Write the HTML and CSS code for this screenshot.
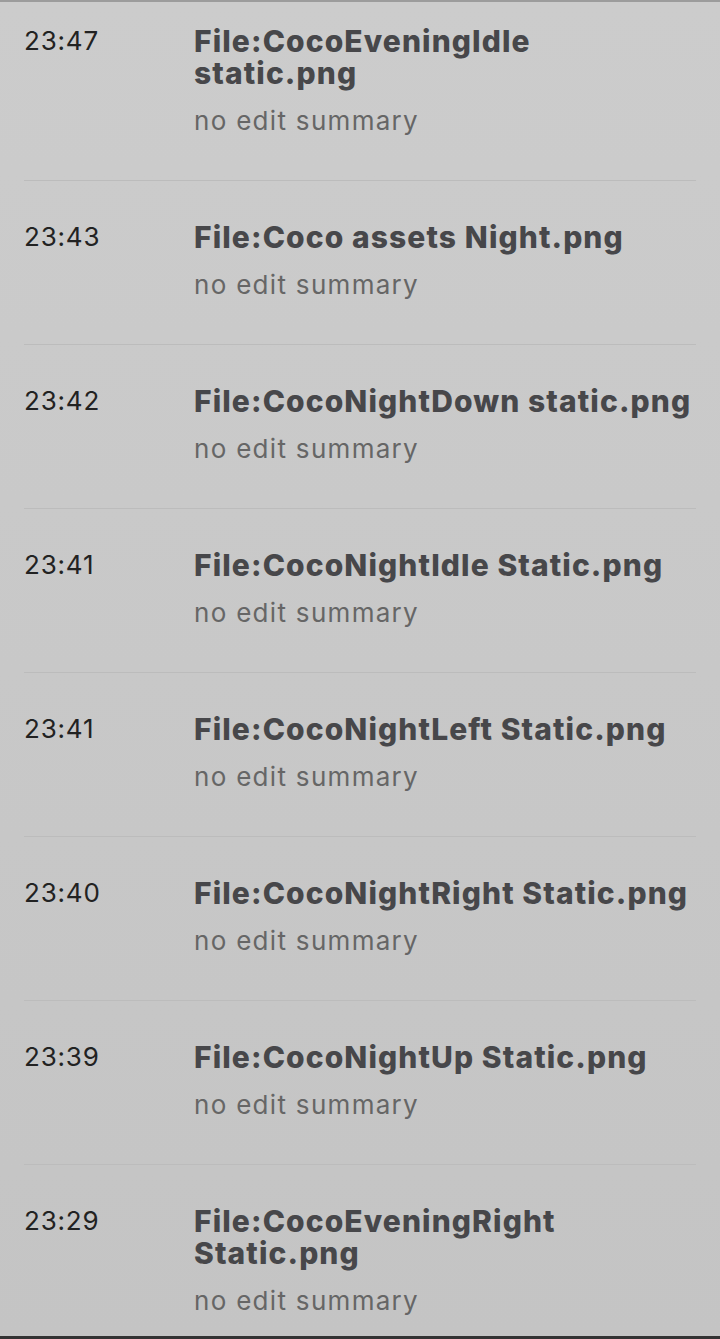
FILE: index.html
```html
<!DOCTYPE html>
<html lang="en">
<head>
<meta charset="utf-8">
<title>Recent changes</title>
<link rel="stylesheet" href="styles.css">
</head>
<body>
<div class="screen">
  <ul class="changes">
    <li class="row first">
      <span class="time">23:47</span>
      <div class="entry">
        <div class="title">File:CocoEveningIdle static.png</div>
        <div class="summary">no edit summary</div>
      </div>
    </li>
    <li class="row">
      <span class="time">23:43</span>
      <div class="entry">
        <div class="title">File:Coco assets Night.png</div>
        <div class="summary">no edit summary</div>
      </div>
    </li>
    <li class="row">
      <span class="time">23:42</span>
      <div class="entry">
        <div class="title">File:CocoNightDown static.png</div>
        <div class="summary">no edit summary</div>
      </div>
    </li>
    <li class="row">
      <span class="time">23:41</span>
      <div class="entry">
        <div class="title">File:CocoNightIdle Static.png</div>
        <div class="summary">no edit summary</div>
      </div>
    </li>
    <li class="row">
      <span class="time">23:41</span>
      <div class="entry">
        <div class="title">File:CocoNightLeft Static.png</div>
        <div class="summary">no edit summary</div>
      </div>
    </li>
    <li class="row">
      <span class="time">23:40</span>
      <div class="entry">
        <div class="title">File:CocoNightRight Static.png</div>
        <div class="summary">no edit summary</div>
      </div>
    </li>
    <li class="row">
      <span class="time">23:39</span>
      <div class="entry">
        <div class="title">File:CocoNightUp Static.png</div>
        <div class="summary">no edit summary</div>
      </div>
    </li>
    <li class="row">
      <span class="time">23:29</span>
      <div class="entry">
        <div class="title narrow">File:CocoEveningRight Static.png</div>
        <div class="summary">no edit summary</div>
      </div>
    </li>
  </ul>
</div>
</body>
</html>
```
FILE: styles.css
```css
html, body {
  margin: 0;
  padding: 0;
  background: #c8c8c8;
}
body {
  font-family: Inter, "Noto Sans", sans-serif;
  overflow: hidden;
}
.screen {
  height: 1334px;
  overflow: hidden;
  border-top: 2px solid #9c9c9c;
  border-bottom: 3px solid #333333;
  background: linear-gradient(#cccccc, #c4c4c4);
}
.changes {
  list-style: none;
  margin: 0;
  padding: 0 24px;
}
.row {
  display: grid;
  grid-template-columns: 170px 1fr;
  padding: 40px 0 43px;
  border-bottom: 1px solid #bcbcbc;
}
.row.first {
  padding-top: 23px;
}
.time {
  font-size: 26px;
  line-height: 32px;
  letter-spacing: 0.8px;
  color: #222222;
}
.title {
  font-size: 30px;
  line-height: 32px;
  font-weight: 800;
  letter-spacing: 1.1px;
  color: #47474a;
}
.first .title,
.narrow {
  max-width: 420px;
}
.summary {
  margin-top: 16px;
  font-size: 26px;
  line-height: 32px;
  letter-spacing: 1.3px;
  color: #666666;
}
```
